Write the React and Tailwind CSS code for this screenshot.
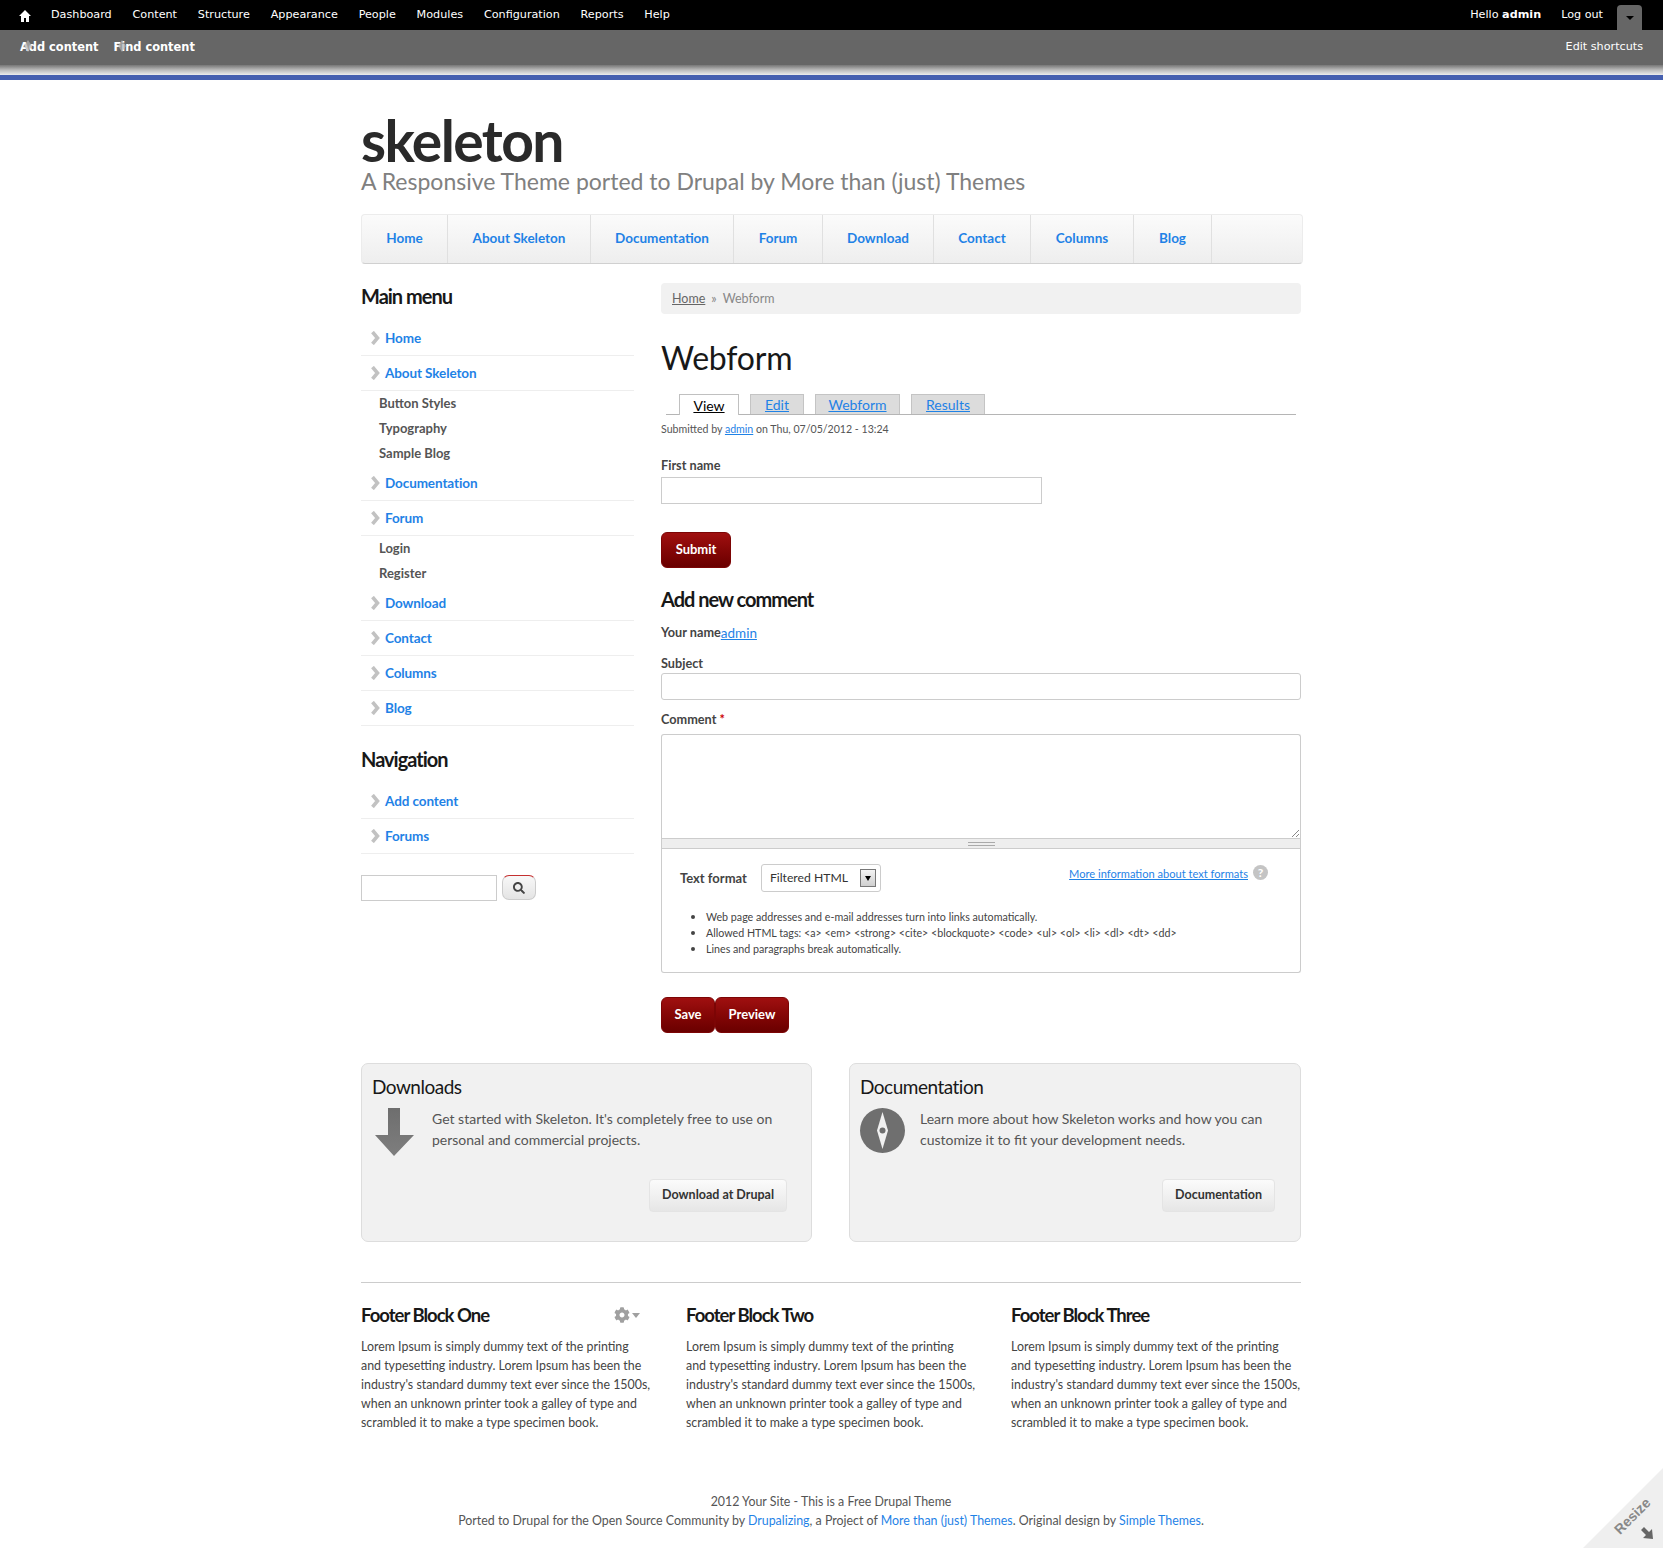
import React from 'react'
import { FaCog, FaSearch } from 'react-icons/fa'

const pt = "font-['Lato','Noto_Sans',sans-serif]"

const adminLinks = ['Dashboard', 'Content', 'Structure', 'Appearance', 'People', 'Modules', 'Configuration', 'Reports', 'Help']
const topMenu = [
  ['Home', 'w-[86px]'],
  ['About Skeleton', 'w-[143px]'],
  ['Documentation', 'w-[143px]'],
  ['Forum', 'w-[89px]'],
  ['Download', 'w-[111px]'],
  ['Contact', 'w-[97px]'],
  ['Columns', 'w-[103px]'],
  ['Blog', 'w-[78px]'],
]
const mainMenu = [
  { label: 'Home' },
  { label: 'About Skeleton', children: ['Button Styles', 'Typography', 'Sample Blog'] },
  { label: 'Documentation' },
  { label: 'Forum', children: ['Login', 'Register'] },
  { label: 'Download' },
  { label: 'Contact' },
  { label: 'Columns' },
  { label: 'Blog' },
]
const footerText = [
  'Lorem Ipsum is simply dummy text of the printing',
  'and typesetting industry. Lorem Ipsum has been the',
  "industry's standard dummy text ever since the 1500s,",
  'when an unknown printer took a galley of type and',
  'scrambled it to make a type specimen book.',
]
const tips = [
  'Web page addresses and e-mail addresses turn into links automatically.',
  'Allowed HTML tags: <a> <em> <strong> <cite> <blockquote> <code> <ul> <ol> <li> <dl> <dt> <dd>',
  'Lines and paragraphs break automatically.',
]

const Chevron = () => (
  <svg width="9" height="14" viewBox="0 0 9 14" className="shrink-0">
    <path d="M1.5 1 L6.5 7 L1.5 13" fill="none" stroke="#c2c2c2" strokeWidth="3.6" />
  </svg>
)

const Diamond = () => (
  <svg width="8" height="12" viewBox="0 0 8 12" className="absolute left-[4px] top-[1px] opacity-70">
    <path d="M4 0 L8 6 L4 12 L0 6 Z" fill="#b4b4b4" />
  </svg>
)

const MenuRow = ({ label }) => (
  <div className="flex items-center h-[35px] pl-[10px] gap-[5px] border-b border-[#eeeeee]">
    <Chevron />
    <a className="text-[13.5px] font-bold text-[#1f82e6] tracking-[-0.1px]">{label}</a>
  </div>
)

const RedButton = ({ children, className = '' }) => (
  <button className={`h-[36px] rounded-[6px] bg-gradient-to-b from-[#a01010] to-[#6a0000] border border-[#7c0505] text-white text-[13px] font-bold ${className}`}>
    {children}
  </button>
)

const FieldLabel = ({ children }) => (
  <div className="text-[12.7px] font-bold text-[#444444] leading-[18px]">{children}</div>
)

const GreyButton = ({ children }) => (
  <button className="h-[33px] px-[12px] rounded-[4px] border border-[#e4e4e4] bg-gradient-to-b from-[#fbfbfb] to-[#e6e6e6] text-[12.5px] font-bold text-[#333333]">
    {children}
  </button>
)

const App = () => {
  return (
    <div className={`relative w-full h-[1548px] overflow-hidden bg-white ${pt}`}>
      {/* admin toolbar */}
      <div className="font-['DejaVu_Sans',sans-serif] text-white">
        <div className="h-[30px] bg-black flex items-center pl-[19px] pr-[21px] pt-[1px] text-[11.2px]">
          <svg width="12" height="12" viewBox="0 0 12 12" className="mr-[20px]">
            <path d="M6 0 L12 6 H10 V12 H7 V8 H5 V12 H2 V6 H0 Z" fill="#ffffff" />
          </svg>
          <div className="flex gap-[20.8px]">
            {adminLinks.map((l) => (
              <a key={l}>{l}</a>
            ))}
          </div>
          <div className="ml-auto flex items-center">
            <span>Hello <b>admin</b></span>
            <a className="ml-[20px] mr-[14px]">Log out</a>
            <div className="w-[25px] h-[25px] mt-[4px] rounded-t-[4px] bg-[#666666] flex items-center justify-center">
              <span className="w-0 h-0 border-x-[4px] border-x-transparent border-t-[4px] border-t-black" />
            </div>
          </div>
        </div>
        <div className="h-[35px] bg-[#666666] flex items-center pl-[20px] pr-[20px] text-[11.4px]">
          <b className="relative">
            <span>Add content</span>
            <Diamond />
          </b>
          <b className="relative ml-[15px]">
            <span>Find content</span>
            <Diamond />
          </b>
          <a className="ml-auto text-[11.2px]">Edit shortcuts</a>
        </div>
        <div className="h-[10px] bg-gradient-to-b from-[#777777] via-[#bbbbbb] to-[#eeeeee]" />
        <div className="h-[5px] bg-[#4660b0]" />
      </div>

      <div className="w-[940px] ml-[361px]">
        {/* header */}
        <h1 className="mt-[36px] text-[57px] leading-[48px] font-bold text-[#2a2a2a] tracking-[-1.6px]">skeleton</h1>
        <p className="mt-[3px] text-[23px] leading-[28px] text-[#808080]">A Responsive Theme ported to Drupal by More than (just) Themes</p>

        {/* primary menu */}
        <nav className="mt-[19px] w-[942px] h-[50px] rounded-[4px] border border-[#ececec] border-b-[#d0d0d0] bg-gradient-to-b from-[#fbfbfb] to-[#eeeeee] flex">
          {topMenu.map(([label, w]) => (
            <a key={label} className={`${w} flex items-center justify-center pb-[1px] border-r border-[#e0e0e0] text-[13.5px] font-bold text-[#1f82e6]`}>
              {label}
            </a>
          ))}
        </nav>

        <div className="flex mt-[19px]">
          {/* sidebar */}
          <aside className="w-[273px] shrink-0">
            <h2 className="text-[20px] leading-[26px] font-bold text-[#181818] tracking-[-1px]">Main menu</h2>
            <div className="mt-[12px]">
              {mainMenu.map((item) => (
                <div key={item.label}>
                  <MenuRow label={item.label} />
                  {item.children && (
                    <div className="pl-[18px]">
                      {item.children.map((c) => (
                        <div key={c} className="h-[25px] flex items-center text-[13px] font-bold text-[#555555]">{c}</div>
                      ))}
                    </div>
                  )}
                </div>
              ))}
            </div>
            <h2 className="mt-[20px] text-[20px] leading-[26px] font-bold text-[#181818] tracking-[-1px]">Navigation</h2>
            <div className="mt-[12px]">
              <MenuRow label="Add content" />
              <MenuRow label="Forums" />
            </div>
            <div className="mt-[21px] flex items-start gap-[5px]">
              <div className="w-[136px] h-[26px] border border-[#cccccc]" />
              <button className="w-[34px] h-[25px] rounded-[7px] border border-[#cccccc] border-t-[#c43030] bg-gradient-to-b from-[#f8f8f8] to-[#e4e4e4] flex items-center justify-center">
                <FaSearch size={12} className="text-[#444444]" />
              </button>
            </div>
          </aside>

          {/* main */}
          <main className="ml-[27px] w-[640px]">
            <div className="h-[31px] rounded-[4px] bg-[#f1f1f1] flex items-center pl-[11px] pt-[2px] text-[12.5px] text-[#888888]">
              <a className="underline text-[#666666]">Home</a>
              <span className="mx-[6px]">»</span>
              <span>Webform</span>
            </div>
            <h1 className="mt-[23px] text-[32px] leading-[42px] text-[#181818] tracking-[-0.2px]">Webform</h1>

            <div className="mt-[15px] h-[21px] mx-[5px] border-b border-[#b5b5b5] flex pl-[13px] text-[14px]">
              <a className="w-[60px] h-[21px] bg-white border border-b-0 border-[#c0c0c0] text-center text-black underline leading-[21px]">View</a>
              <a className="ml-[11px] w-[54px] h-[20px] bg-[#dcdcdc] border border-b-0 border-[#c4c4c4] text-center text-[#1f82e6] underline leading-[20px]">Edit</a>
              <a className="ml-[11px] w-[85px] h-[20px] bg-[#dcdcdc] border border-b-0 border-[#c4c4c4] text-center text-[#1f82e6] underline leading-[20px]">Webform</a>
              <a className="ml-[11px] w-[74px] h-[20px] bg-[#dcdcdc] border border-b-0 border-[#c4c4c4] text-center text-[#1f82e6] underline leading-[20px]">Results</a>
            </div>
            <p className="mt-[6px] text-[10.6px] leading-[16px] text-[#555555]">
              Submitted by <a className="underline text-[#1f82e6]">admin</a> on Thu, 07/05/2012 - 13:24
            </p>

            <div className="mt-[19px]"><FieldLabel>First name</FieldLabel></div>
            <div className="mt-[3px] w-[381px] h-[27px] border border-[#cccccc]" />
            <RedButton className="mt-[28px] w-[70px] block">Submit</RedButton>

            <h2 className="mt-[17px] text-[20px] leading-[28px] font-bold text-[#181818] tracking-[-1px]">Add new comment</h2>
            <div className="mt-[10px] flex items-center h-[20px]">
              <span className="text-[12.7px] font-bold text-[#444444]">Your name</span>
              <a className="text-[13.5px] underline text-[#1f82e6]">admin</a>
            </div>
            <div className="mt-[11px]"><FieldLabel>Subject</FieldLabel></div>
            <div className="mt-[1px] h-[27px] border border-[#cccccc] rounded-[3px]" />
            <div className="mt-[10px]"><FieldLabel>Comment <span className="text-[#cc0000]">*</span></FieldLabel></div>
            <div className="relative mt-[6px] h-[104px] border border-[#cccccc] border-b-0 rounded-t-[3px]">
              <svg width="10" height="10" viewBox="0 0 10 10" className="absolute right-0 bottom-0">
                <path d="M9 2 L2 9 M9 6 L6 9" stroke="#888888" strokeWidth="1" />
              </svg>
            </div>
            <div className="h-[11px] bg-[#eeeeee] border border-[#cccccc] flex items-center justify-center">
              <div className="w-[27px] h-[4px] border-y border-[#aaaaaa]" />
            </div>
            <div className="h-[124px] border border-t-0 border-[#cccccc] rounded-b-[3px] pl-[18px] pr-[32px] pt-[15px]">
              <div className="flex items-start">
                <span className="mt-[5px] text-[13px] font-bold text-[#444444]">Text format</span>
                <div className="ml-[14px] w-[120px] h-[28px] rounded-[3px] border border-[#cccccc] flex items-center justify-between pl-[8px] pr-[4px] text-[12.2px] text-[#333333]">
                  Filtered HTML
                  <span className="w-[16px] h-[18px] border border-[#777777] bg-gradient-to-b from-[#f4f4f4] to-[#cfcfcf] flex items-center justify-center">
                    <span className="w-0 h-0 border-x-[3.5px] border-x-transparent border-t-[5px] border-t-black" />
                  </span>
                </div>
                <a className="ml-auto mt-[2px] text-[11.1px] text-[#1f82e6] underline">More information about text formats</a>
                <span className="ml-[5px] mt-[1px] w-[15px] h-[15px] rounded-full bg-[#c4c4c4] text-white text-[12px] font-bold leading-[15px] text-center">?</span>
              </div>
              <ul className="mt-[17px] ml-[11px] text-[10.7px] leading-[16px] text-[#444444]">
                {tips.map((t) => (
                  <li key={t} className="flex items-center">
                    <span className="w-[4px] h-[4px] rounded-full bg-[#444444] mr-[11px]" />
                    {t}
                  </li>
                ))}
              </ul>
            </div>
            <div className="mt-[24px] flex">
              <RedButton className="w-[54px]">Save</RedButton>
              <RedButton className="w-[74px]">Preview</RedButton>
            </div>
          </main>
        </div>

        {/* info boxes */}
        <div className="mt-[30px] flex justify-between">
          <div className="w-[451px] h-[179px] rounded-[7px] border border-[#dddddd] bg-[#f1f1f1] pl-[10px] pr-[24px] pt-[10px]">
            <h3 className="text-[19px] leading-[26px] text-[#181818] tracking-[-0.5px]">Downloads</h3>
            <div className="flex h-[48px] mt-[8px]">
              <svg width="45" height="48" viewBox="0 0 45 48" className="shrink-0">
                <defs>
                  <linearGradient id="arrowFill" x1="0" y1="0" x2="0" y2="1">
                    <stop offset="0" stopColor="#6e6e6e" />
                    <stop offset="1" stopColor="#7e7e7e" />
                  </linearGradient>
                </defs>
                <path d="M16 0 H28 V27 H42 L22 48 L3 27 H16 Z" fill="url(#arrowFill)" />
              </svg>
              <p className="ml-[15px] text-[14px] leading-[21px] text-[#555555]">Get started with Skeleton. It's completely free to use on personal and commercial projects.</p>
            </div>
            <div className="mt-[23px] flex justify-end">
              <GreyButton>Download at Drupal</GreyButton>
            </div>
          </div>
          <div className="w-[452px] h-[179px] rounded-[7px] border border-[#dddddd] bg-[#f1f1f1] pl-[10px] pr-[25px] pt-[10px]">
            <h3 className="text-[19px] leading-[26px] text-[#181818] tracking-[-0.5px]">Documentation</h3>
            <div className="flex h-[48px] mt-[8px]">
              <svg width="45" height="45" viewBox="0 0 45 45" className="shrink-0">
                <circle cx="22.5" cy="22.5" r="22.5" fill="#6f6f6f" />
                <path d="M22.5 4 L28 22.5 L22.5 41 L17 22.5 Z" fill="#f1f1f1" />
                <circle cx="22.5" cy="22.5" r="3" fill="#6f6f6f" />
              </svg>
              <p className="ml-[15px] text-[14px] leading-[21px] text-[#555555]">Learn more about how Skeleton works and how you can customize it to fit your development needs.</p>
            </div>
            <div className="mt-[23px] flex justify-end">
              <GreyButton>Documentation</GreyButton>
            </div>
          </div>
        </div>

        {/* footer blocks */}
        <div className="mt-[40px] border-t border-[#cccccc] pt-[18px] grid grid-cols-[325px_325px_290px]">
          {['Footer Block One', 'Footer Block Two', 'Footer Block Three'].map((title, i) => (
            <div key={title} className="relative">
              <h3 className="text-[18.5px] leading-[28px] font-bold text-[#181818] tracking-[-1px]">{title}</h3>
              {i === 0 && (
                <div className="absolute left-[253px] top-[6px] flex items-center gap-[2px]">
                  <FaCog size={16} className="text-[#a0a0a0]" />
                  <span className="w-0 h-0 border-x-[4px] border-x-transparent border-t-[5px] border-t-[#a0a0a0]" />
                </div>
              )}
              <div className="mt-[8px] text-[12.4px] leading-[19px] text-[#444444] whitespace-nowrap">
                {footerText.map((line) => (
                  <div key={line}>{line}</div>
                ))}
              </div>
            </div>
          ))}
        </div>

        {/* credits */}
        <div className="mt-[60px] text-center text-[12.4px] leading-[19px] text-[#555555]">
          <p>2012 Your Site - This is a Free Drupal Theme</p>
          <p>
            Ported to Drupal for the Open Source Community by <a className="text-[#1f82e6]">Drupalizing</a>, a Project of <a className="text-[#1f82e6]">More than (just) Themes</a>. Original design by <a className="text-[#1f82e6]">Simple Themes</a>.
          </p>
        </div>
      </div>

      {/* resize corner */}
      <div className="absolute right-0 bottom-0 w-[80px] h-[80px] bg-[#efefef] [clip-path:polygon(100%_0,100%_100%,0_100%)] font-['Liberation_Sans',sans-serif]">
        <span className="absolute left-[27px] top-[41px] -rotate-45 text-[14px] font-bold leading-none text-[#888888]">Resize</span>
        <svg width="14" height="14" viewBox="0 0 14 14" className="absolute right-[9px] bottom-[8px]">
          <path d="M1 4 L4 1 L9 6 L12 3 L13 13 L3 12 L6 9 Z" fill="#666666" />
        </svg>
      </div>
    </div>
  )
}

export default App
